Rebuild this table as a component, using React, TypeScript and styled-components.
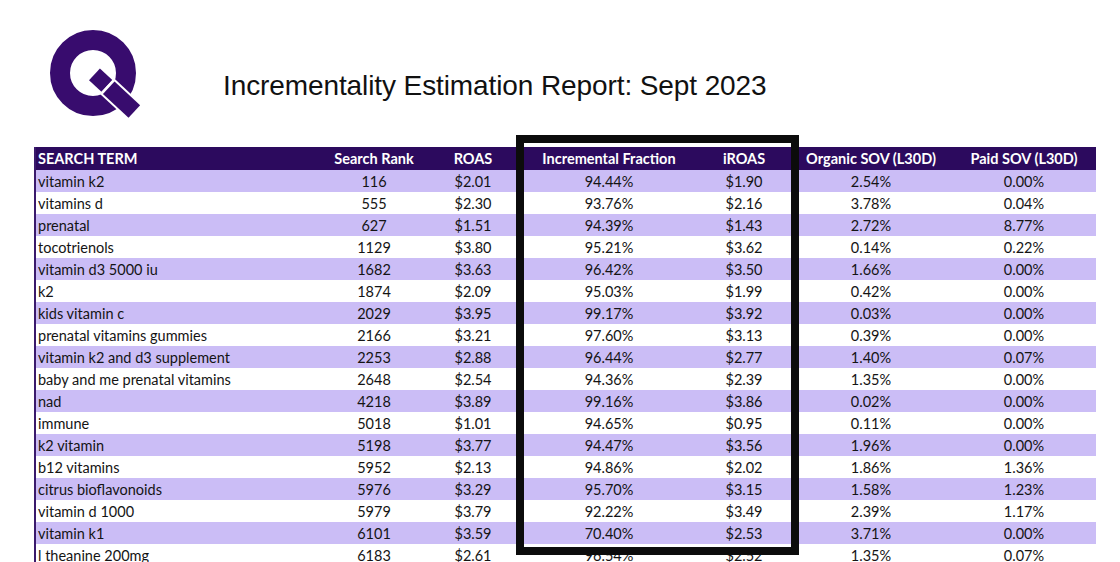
import React from "react";
import styled, { createGlobalStyle } from "styled-components";

const Global = createGlobalStyle`
  html, body { margin: 0; padding: 0; background: #ffffff; }
  body { width: 1120px; height: 562px; overflow: hidden; }
`;

const Page = styled.div`
  width: 1120px;
  height: 562px;
  overflow: hidden;
  background: #fff;
`;

const Header = styled.header`
  display: flex;
  align-items: flex-start;
  height: 147px;
  padding-left: 45px;
  box-sizing: border-box;
`;

const Logo = styled.svg`
  display: block;
  margin-top: 24px;
  flex: none;
`;

const Title = styled.h1`
  margin: 70px 0 0 78px;
  font-family: "Liberation Sans", Arial, sans-serif;
  font-weight: 400;
  font-size: 28px;
  line-height: 32px;
  color: #111;
  letter-spacing: -0.1px;
`;

const TableWrap = styled.div`
  position: relative;
  margin-left: 34px;
  width: 1062px;
`;

const cols = "288px 100px 98px 174px 96px 158px 148px";

const Row = styled.div<{ $shade: "head" | "lav" | "white" }>`
  display: grid;
  grid-template-columns: ${cols};
  height: ${(p) => (p.$shade === "head" ? "23px" : "22px")};
  align-items: center;
  background: ${(p) =>
    p.$shade === "head" ? "#2c0a5e" : p.$shade === "lav" ? "#cbbdf6" : "#ffffff"};
  border-left: 2px solid #3a1a6c;
  box-sizing: border-box;
  font-family: Lato, "Open Sans", sans-serif;
  font-size: 14.5px;
  font-weight: ${(p) => (p.$shade === "head" ? 700 : 400)};
  color: ${(p) => (p.$shade === "head" ? "#ffffff" : "#141414")};
  white-space: nowrap;
`;

const Cell = styled.div<{ $left?: boolean }>`
  text-align: ${(p) => (p.$left ? "left" : "center")};
  padding-left: ${(p) => (p.$left ? "2px" : "0")};
  overflow: hidden;
`;

const Highlight = styled.div`
  position: absolute;
  left: 482px;
  top: -12px;
  width: 283px;
  height: 420px;
  border: 8px solid #0c0c0c;
  box-sizing: border-box;
  pointer-events: none;
`;

const headers = [
  "SEARCH TERM",
  "Search Rank",
  "ROAS",
  "Incremental Fraction",
  "iROAS",
  "Organic SOV (L30D)",
  "Paid SOV (L30D)",
];

const rows: string[][] = [
  ["vitamin k2", "116", "$2.01", "94.44%", "$1.90", "2.54%", "0.00%"],
  ["vitamins d", "555", "$2.30", "93.76%", "$2.16", "3.78%", "0.04%"],
  ["prenatal", "627", "$1.51", "94.39%", "$1.43", "2.72%", "8.77%"],
  ["tocotrienols", "1129", "$3.80", "95.21%", "$3.62", "0.14%", "0.22%"],
  ["vitamin d3 5000 iu", "1682", "$3.63", "96.42%", "$3.50", "1.66%", "0.00%"],
  ["k2", "1874", "$2.09", "95.03%", "$1.99", "0.42%", "0.00%"],
  ["kids vitamin c", "2029", "$3.95", "99.17%", "$3.92", "0.03%", "0.00%"],
  ["prenatal vitamins gummies", "2166", "$3.21", "97.60%", "$3.13", "0.39%", "0.00%"],
  ["vitamin k2 and d3 supplement", "2253", "$2.88", "96.44%", "$2.77", "1.40%", "0.07%"],
  ["baby and me prenatal vitamins", "2648", "$2.54", "94.36%", "$2.39", "1.35%", "0.00%"],
  ["nad", "4218", "$3.89", "99.16%", "$3.86", "0.02%", "0.00%"],
  ["immune", "5018", "$1.01", "94.65%", "$0.95", "0.11%", "0.00%"],
  ["k2 vitamin", "5198", "$3.77", "94.47%", "$3.56", "1.96%", "0.00%"],
  ["b12 vitamins", "5952", "$2.13", "94.86%", "$2.02", "1.86%", "1.36%"],
  ["citrus bioflavonoids", "5976", "$3.29", "95.70%", "$3.15", "1.58%", "1.23%"],
  ["vitamin d 1000", "5979", "$3.79", "92.22%", "$3.49", "2.39%", "1.17%"],
  ["vitamin k1", "6101", "$3.59", "70.40%", "$2.53", "3.71%", "0.00%"],
  ["l theanine 200mg", "6183", "$2.61", "96.54%", "$2.52", "1.35%", "0.07%"],
];

const QLogo = () => (
  <Logo width="100" height="100" viewBox="45 24 100 100">
    <circle cx="93" cy="73" r="33" fill="none" stroke="#380c6e" strokeWidth="20" />
    <g transform="translate(93 73) rotate(43)">
      <rect x="2" y="-8" width="17" height="16" fill="#380c6e" />
      <rect x="19" y="-10.5" width="39.5" height="21" fill="#ffffff" />
      <rect x="21.5" y="-8.5" width="35" height="17" fill="#380c6e" />
    </g>
  </Logo>
);

export default function App() {
  return (
    <Page>
      <Global />
      <Header>
        <QLogo />
        <Title>Incrementality Estimation Report: Sept 2023</Title>
      </Header>
      <TableWrap>
        <Row $shade="head">
          {headers.map((h, i) => (
            <Cell key={h} $left={i === 0}>
              {h}
            </Cell>
          ))}
        </Row>
        {rows.map((r, ri) => (
          <Row key={r[0]} $shade={ri % 2 === 0 ? "lav" : "white"}>
            {r.map((v, i) => (
              <Cell key={i} $left={i === 0}>
                {v}
              </Cell>
            ))}
          </Row>
        ))}
        <Highlight />
      </TableWrap>
    </Page>
  );
}
